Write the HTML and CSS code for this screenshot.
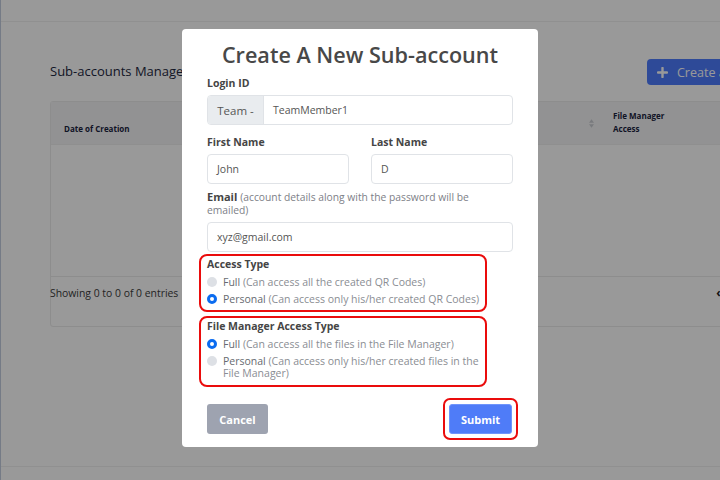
FILE: index.html
```html
<!DOCTYPE html>
<html lang="en">
<head>
<meta charset="utf-8">
<title>Create A New Sub-account</title>
<link rel="stylesheet" href="styles.css">
</head>
<body>
<div class="page">
  <div class="topbar"></div>
  <div class="main">
    <div class="title-row">
      <h2 class="page-title">Sub-accounts Management</h2>
      <button class="create-btn"><svg class="plus" viewBox="0 0 12 12" width="11" height="11"><path d="M6 1v10M1 6h10" stroke="#fff" stroke-width="2.6" stroke-linecap="round"/></svg><span class="create-text">Create a Sub-account</span></button>
    </div>
    <div class="card">
      <div class="thead">
        <div class="th th-date">Date of Creation</div>
        <div class="th th-sort"><svg viewBox="0 0 6 10" width="5" height="9"><path d="M3 0L6 4H0z M3 10L0 6h6z" fill="#c9ccd2"/></svg></div>
        <div class="th th-fm">File Manager Access</div>
      </div>
      <div class="tbody"></div>
      <div class="tfoot">
        <span class="showing">Showing 0 to 0 of 0 entries</span>
        <span class="pager">‹</span>
      </div>
    </div>
  </div>
  <div class="bottom-line"></div>
</div>

<div class="overlay">
  <div class="modal">
    <h1 class="modal-title">Create A New Sub-account</h1>

    <div class="field">
      <label class="label">Login ID</label>
      <div class="input-group">
        <span class="prefix">Team -</span>
        <span class="input-value">TeamMember1</span>
      </div>
    </div>

    <div class="field name-row">
      <div>
        <label class="label">First Name</label>
        <div class="input"><span class="input-value">John</span></div>
      </div>
      <div>
        <label class="label">Last Name</label>
        <div class="input"><span class="input-value">D</span></div>
      </div>
    </div>

    <div class="field field-email">
      <label class="label email-label">Email <span class="hint">(account details along with the password will be emailed)</span></label>
      <div class="input"><span class="input-value">xyz@gmail.com</span></div>
    </div>

    <div class="box box-access">
      <div class="label">Access Type</div>
      <div class="radio"><span class="dot"></span><span class="rtext">Full <span class="hint">(Can access all the created QR Codes)</span></span></div>
      <div class="radio"><span class="dot on"></span><span class="rtext">Personal <span class="hint">(Can access only his/her created QR Codes)</span></span></div>
    </div>

    <div class="box box-fm">
      <div class="label">File Manager Access Type</div>
      <div class="radio"><span class="dot on"></span><span class="rtext">Full <span class="hint">(Can access all the files in the File Manager)</span></span></div>
      <div class="radio"><span class="dot"></span><span class="rtext">Personal <span class="hint">(Can access only his/her created files in the File Manager)</span></span></div>
    </div>

    <div class="actions">
      <button class="btn btn-cancel">Cancel</button>
      <div class="submit-ring"><button class="btn btn-submit">Submit</button></div>
    </div>
  </div>
</div>
</body>
</html>
```

FILE: styles.css
```css
* { box-sizing: border-box; }
html, body { margin: 0; padding: 0; }
body {
  width: 720px;
  height: 480px;
  overflow: hidden;
  font-family: "Open Sans", "Liberation Sans", sans-serif;
  background: #fff;
  position: relative;
}
.page {
  height: 480px;
  border-left: 1px solid #c4cde0;
  display: flex;
  flex-direction: column;
}
.topbar {
  height: 22px;
  border-bottom: 1px solid #f1f1f1;
  flex: none;
}
.main {
  padding-left: 49px;
  flex: 1;
}
.title-row {
  width: 670px;
  margin-top: 37px;
  height: 26px;
  display: flex;
  align-items: center;
  justify-content: space-between;
}
.page-title {
  margin: -3px 0 0 0;
  font-size: 13px;
  font-weight: 400;
  color: #1d2741;
  white-space: nowrap;
}
.create-btn {
  height: 26px;
  width: 73px;
  border: none;
  border-radius: 4px 0 0 4px;
  background: #4e7cfe;
  color: #fff;
  font-family: inherit;
  font-size: 12.5px;
  display: flex;
  align-items: center;
  gap: 9px;
  padding: 0 0 0 10px;
  white-space: nowrap;
  overflow: hidden;
}
.plus { flex: none; }
.create-text { flex: none; }
.card {
  margin-top: 16px;
  width: 720px;
  border: 1px solid #ececec;
  border-radius: 3px;
}
.thead {
  height: 43px;
  background: #f4f4f5;
  border-bottom: 1px solid #efefef;
  display: flex;
  align-items: flex-end;
  padding: 0 0 9px 13px;
}
.th {
  font-size: 8px;
  font-weight: 700;
  color: #1a2340;
  line-height: 13px;
}
.th-date { width: 525px; }
.th-sort { width: 24px; align-self: center; display: flex; margin-top: 9px; }
.th-fm { width: 68px; }
.tbody { height: 131px; }
.tfoot {
  height: 50px;
  border-top: 1px solid #ececec;
  display: flex;
  align-items: flex-start;
  padding-top: 9px;
}
.showing {
  font-size: 10.4px;
  color: #3b3b3b;
  margin-left: -1px;
  flex: none;
}
.pager {
  margin-left: 538px;
  font-size: 12px;
  font-weight: 700;
  color: #222;
  line-height: 14px;
}
.bottom-line {
  height: 14px;
  border-top: 1px solid #f0f0f0;
  flex: none;
}

/* overlay */
.overlay {
  position: absolute;
  inset: 0;
  background: rgba(0, 0, 0, 0.4);
  display: flex;
  justify-content: center;
  align-items: flex-start;
  padding-top: 29px;
}
.modal {
  width: 356px;
  background: #fff;
  border-radius: 4px;
  padding: 11px 25px 13px;
}
.modal-title {
  margin: 0;
  text-align: center;
  font-size: 21.6px;
  line-height: 30px;
  font-weight: 600;
  color: #484848;
}
.label {
  display: block;
  font-size: 10.5px;
  font-weight: 700;
  color: #454545;
  line-height: 16px;
}
.field { margin-top: 5px; }
.field + .field { margin-top: 9px; }
.field .label { margin-bottom: 4px; }
.field.field-email { margin-top: 7px; }
.field-email .label { margin-bottom: 6px; }
.input-group {
  height: 30px;
  border: 1px solid #e0e3e7;
  border-radius: 4px;
  display: flex;
  align-items: center;
  overflow: hidden;
}
.prefix {
  width: 56px;
  height: 100%;
  background: #e9ecef;
  border-right: 1px solid #e0e3e7;
  display: flex;
  align-items: center;
  justify-content: center;
  font-size: 11.5px;
  color: #555;
}
.input-group .input-value { padding-left: 9px; }
.input-value {
  font-size: 10.5px;
  color: #555;
}
.input {
  height: 30px;
  border: 1px solid #e0e3e7;
  border-radius: 4px;
  display: flex;
  align-items: center;
  padding-left: 9px;
}
.name-row {
  display: grid;
  grid-template-columns: 1fr 1fr;
  gap: 22px;
}
.email-label {
  width: 290px;
  line-height: 12.6px;
  font-size: 11px;
}
.hint {
  font-weight: 400;
  color: #8a8d93;
}
.email-label .hint { color: #7d8087; font-size: 10.3px; }
.box {
  width: 288px;
  margin-left: -8px;
  border: 2px solid #ea0c0c;
  border-radius: 8px;
  padding: 0 2px 6px 6px;
}
.box-access { margin-top: 2px; padding-bottom: 5px; }
.box-fm { margin-top: 4px; }
.box .label { line-height: 16px; }
.radio {
  display: flex;
  align-items: flex-start;
  gap: 6px;
  margin-top: 4px;
}
.radio + .radio { margin-top: 5px; }
.dot {
  flex: none;
  width: 10px;
  height: 10px;
  border-radius: 50%;
  background: #dde0e5;
  margin-top: 1px;
}
.dot.on {
  background: #fff;
  border: 3px solid #0b6cf0;
}
.rtext {
  font-size: 10.5px;
  line-height: 12px;
  color: #666a70;
}
.actions {
  margin-top: 17px;
  display: flex;
  justify-content: space-between;
  align-items: center;
}
.btn {
  height: 30px;
  border: none;
  border-radius: 3px;
  color: #fff;
  font-family: inherit;
  font-size: 11px;
  font-weight: 700;
}
.btn-cancel {
  width: 61px;
  background: #9ea3b0;
}
.submit-ring {
  margin: -6px -5px -6px 0;
  border: 2px solid #ea0c0c;
  border-radius: 7px;
  padding: 4px;
}
.btn-submit {
  width: 63px;
  display: block;
  background: #4f7cf8;
  border: 1px solid #6f95fb;
}
```
